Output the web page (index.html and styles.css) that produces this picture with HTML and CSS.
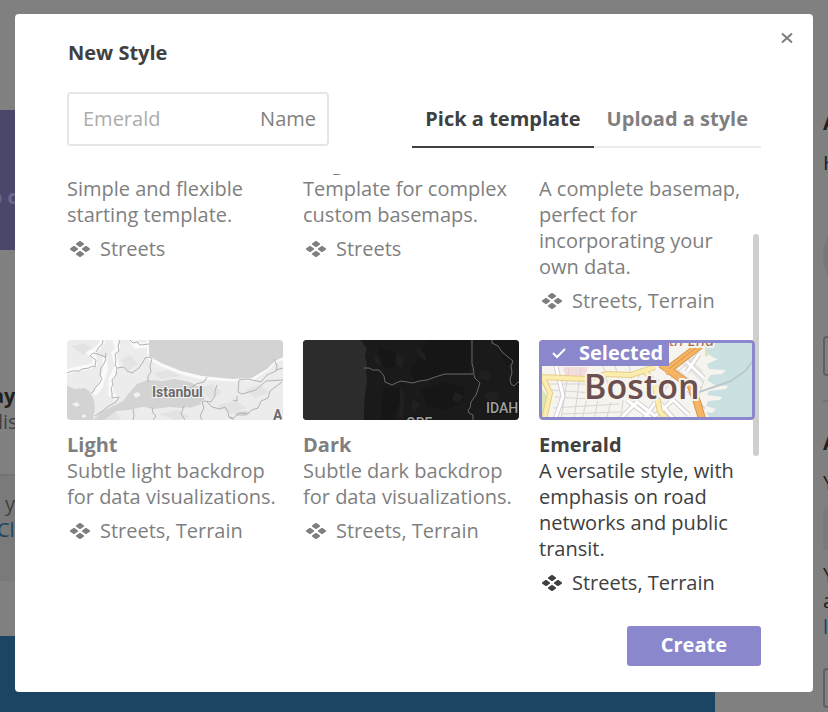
FILE: index.html
```html
<!DOCTYPE html>
<html lang="en">
  <head>
    <meta charset="UTF-8" />
    <meta name="viewport" content="width=device-width, initial-scale=1.0" />
    <title>New Style</title>
    <link rel="stylesheet" href="styles.css">
  </head>
  <body>
    <div class="page" aria-hidden="true">
      <div class="page-main">
        <div class="hero">o d</div>
        <div class="entry">
          <div class="entry-title">ay</div>
          <div class="entry-text">lis</div>
        </div>
        <div class="notice">
          <div class="notice-text">y</div>
          <div class="notice-link">Cl</div>
        </div>
        <div class="band"></div>
      </div>
      <div class="page-side">
        <div class="side-title">A</div>
        <div class="side-text">H</div>
        <div class="side-avatar"></div>
        <div class="side-box"></div>
        <div class="side-rule"></div>
        <div class="side-title">A</div>
        <div class="side-text">Y</div>
        <div class="side-token"></div>
        <div class="side-note">Y<br />a<br /><span class="side-link">l</span></div>
        <div class="side-box"></div>
      </div>
    </div>

    <svg class="sprite" aria-hidden="true">
      <symbol id="icon-sources" viewBox="0 0 20 16">
        <path d="M9.500 0h1l3.500 2.500v1L10.500 6h-1L6 3.500v-1zM3.500 5h1L8 7.500v1L4.500 11h-1L0 8.500v-1zM15.500 5h1L20 7.500v1L16.500 11h-1L12 8.500v-1zM9.500 10h1l3.500 2.500v1L10.500 16h-1L6 13.500v-1z" />
      </symbol>
    </svg>

    <div class="overlay">
      <form class="modal" role="dialog" aria-labelledby="modalTitle">
        <button type="button" class="close" aria-label="Close">
          <svg width="12" height="12" viewBox="0 0 12 12"><path d="M1 1.500l10 9M11 1.500l-10 9" /></svg>
        </button>
        <h1 id="modalTitle">New Style</h1>

        <div class="toolbar">
          <div class="name-field">
            <input type="text" id="styleName" placeholder="Emerald" />
            <label for="styleName">Name</label>
          </div>
          <div class="tabs">
            <button type="button" class="tab active">Pick a template</button>
            <button type="button" class="tab">Upload a style</button>
          </div>
        </div>

        <div class="picker">
          <div class="templates">
            <label class="template">
              <input type="radio" name="template" value="basic" />
              <span class="template-title">Basic</span>
              <span class="template-text">Simple and flexible starting template.</span>
              <span class="sources"><svg class="icon"><use href="#icon-sources" /></svg>Streets</span>
            </label>

            <label class="template">
              <input type="radio" name="template" value="bright" />
              <span class="template-title">Bright</span>
              <span class="template-text">Template for complex custom basemaps.</span>
              <span class="sources"><svg class="icon"><use href="#icon-sources" /></svg>Streets</span>
            </label>

            <label class="template">
              <input type="radio" name="template" value="streets" />
              <span class="template-title">Streets</span>
              <span class="template-text">A complete basemap, perfect for incorporating your own data.</span>
              <span class="sources"><svg class="icon"><use href="#icon-sources" /></svg>Streets, Terrain</span>
            </label>

            <label class="template">
              <input type="radio" name="template" value="light" />
              <span class="thumb">
                <svg class="map" viewBox="0 0 216 80" preserveAspectRatio="xMidYMid slice">
                  <rect width="216" height="80" fill="#ececec" />
                  <g fill="#e3e3e3">
                    <path d="M4 6l14-3 10 7-12 5zM54 20l9-5 8 9-10 7zM86 33l16-3 12 6-20 3zM132 48l14-4 9 8-12 8zM178 50l14-5 10 7-14 6zM36 74l12-3 6 9H36zM150 66l18-6 12 8-16 6zM92 74l18-4 14 7-16 3z" />
                  </g>
                  <g fill="none" stroke="#fafafa" stroke-width="5" stroke-linejoin="round">
                    <path d="M82 0l1 17 12 7 20 8 20 5 30 2 20-1 15-10 8-8 8-3" />
                    <path d="M0 32l10-3 12-2 6-3-1-8-5-3 8-4 5-6 1-5M38 17l0 14-5 16-6 7M48 0l3 8-4 5 3 14-6 12 0 16 6 3" />
                    <path d="M65 0l4 6 13-1" />
                  </g>
                  <g fill="#d3d3d3">
                    <path d="M82 0v16l12 7 20 8 21 5 30 3 20-1 15-9 8-8 8-4V0z" />
                    <path d="M0 46l8 3 10-1 5 4 4 8 1 8-2 12H0z" />
                    <path d="M26 80l10-9 12-6 8-4 7-9 7-8 11-4 14 1 12-2 16 3 9 5 6 12-8 6-14 3-14-1-15 2-12-2-14 3-12 1-12 9z" />
                    <path d="M110 63l15-2 10 3-12 4zM168 73l10-2 5 2-4 3h-10z" />
                  </g>
                  <g fill="#f1f1f1">
                    <path d="M5 64l5-2 3 3-4 2zM15 75l3-1 1 3-4 1zM66 54l5-2 3 3-5 3zM74 68l5-1-3 4z" />
                  </g>
                  <g fill="none" stroke="#b3b3b3" stroke-width="1" stroke-linejoin="round">
                    <path d="M0 33l5-2 7 0 3-2 7-1 4-2 2 1 1-7-6-4 3-3 5 1 5 2 3 1-1 5-4 6-1 7 2 4-3 5-4 4-1 3-3 2" />
                    <path d="M39 13l-1 5M29 12l3-5 3-2 1-5M53 0l-2 6 1 5-4 3 1 6-1 5 2 3-1 7-4 5 1 5-2 3 1 5 0 5 7-1-3 5-7 4-8 6-6 4" />
                    <path d="M50 28l7-1 3 4 5 2 7-5 4-6 2-4 5-1 2 2-2 7 1 6-3 4 0 6M63 0l3 3 4-1 3 3 9-1" />
                    <path d="M140 37l-3 5-8 2-5 4-4 7 5 1" />
                    <path d="M207 19l3 7-1 5-9 4-6 7-13-3-9 1-1 12 4 2 14-4 10-9 17-1M209 30l7-2M170 56l0 5-4-1M150 45l-2 6 0 5-4 6-6-1-3 1 2 6-4 8 2 4" />
                    <path d="M66 69l1 6-1 5M85 67l1 6 3 3-3 4M117 66l-3 8 4 6M140 62l5 5 8 2 5-2 3 5 1 5 5 3M162 77l5 1 5-5 8 1 5-4 6-2 3-7 7-3 2-7 12-9" />
                  </g>
                  <g class="label-light">
                    <text x="85" y="57">Istanbul</text>
                    <text x="206" y="80">A</text>
                  </g>
                </svg>
              </span>
              <span class="template-title">Light</span>
              <span class="template-text">Subtle light backdrop for data visualizations.</span>
              <span class="sources"><svg class="icon"><use href="#icon-sources" /></svg>Streets, Terrain</span>
            </label>

            <label class="template">
              <input type="radio" name="template" value="dark" />
              <span class="thumb">
                <svg class="map" viewBox="0 0 216 80" preserveAspectRatio="xMidYMid slice">
                  <rect width="216" height="80" fill="#1a1a1a" />
                  <path d="M0 0h58l3 5 3 3-2 8 2 9-1 5 1 12-2 12-1 12 0 14H0z" fill="#2c2c2c" />
                  <g fill="#161616">
                    <path d="M124 0h43v33l-26 2-14 4-14 3-6-12 8-12zM76 8l14 3 6 12-10 6-12-6zM80 48l16-2 2 14-8 20H78zM118 50l24-8 20 6-3 14-14 8-20-4zM190 0h26v18l-12 8z" />
                  </g>
                  <g fill="#202020">
                    <path d="M94 14l8 4-3 10-7-4zM112 6l10 8 2 8-8-6zM70 14l6 2 3 10-6-2zM97 46l5 10-2 22-4-1 1-16zM178 30l10 3-2 9-10-4zM180 54l14-3 3 8-12 5zM152 52l8 4-4 7-7-3zM110 60l8 4-6 8-4-4z" />
                  </g>
                  <g fill="none" stroke="#686868" stroke-width="1" stroke-linejoin="round">
                    <path d="M61 28l5 0 4 2 6 0 5 6 1 6 7 3 4-2 5-2 12 2 6-2 8-1 8-3 10-3h29l-1-7-1-3V0" />
                    <path d="M171 35l1 3 5 5-2 6-2 6-5 7-1 6-2 2 1 3 4 2v6M189 0v3l6 3 4 6 6 5 5 4-2 5 1 7-2 6 1 5 3 2 4-4h3" />
                  </g>
                  <g class="label-dark">
                    <text x="183" y="73">IDAH</text>
                    <text x="103" y="88">ORE</text>
                  </g>
                </svg>
              </span>
              <span class="template-title">Dark</span>
              <span class="template-text">Subtle dark backdrop for data visualizations.</span>
              <span class="sources"><svg class="icon"><use href="#icon-sources" /></svg>Streets, Terrain</span>
            </label>

            <label class="template selected">
              <input type="radio" name="template" value="emerald" checked />
              <span class="thumb">
                <svg class="map" viewBox="0 0 216 80" preserveAspectRatio="xMidYMid slice">
                  <rect width="216" height="80" fill="#f5f4ef" />
                  <path d="M24 27h24v9H26zM118 38l12 8-5 6-10-7z" fill="#f5dcdc" />
                  <path d="M0 44l9 14-2 22H0zM166 2l6 12-6 3z" fill="#d9e5bd" />
                  <path d="M166 0L168 12L173 17L179 19L168 24L170 29L187 30L183 34L172 35L168 40L176 45L189 46L187 49L170 51L168 55L183 57L181 60L169 61L167 66L177 69L173 73L167 72L172 80H216V0z" fill="#cbe0e0" />
                  <g fill="none" stroke="#d8d3d5" stroke-width="1">
                    <path d="M10 44h40M12 50l42 3M16 57l34 2M14 68l66-4M22 74l60-2M30 28l-8 52M42 27l-7 53M52 40l-9 40M60 54l-5 26M72 62l-5 18M84 60l-2 20M64 26l5 18M76 26l5 16M90 26l3 14M102 28l-4 14M136 28l26 20M140 20l24 22M146 16l18 16M160 12l-28 26M150 50l16 18M165 40l-8 24" />
                    <path d="M216 18l-10 13-14 10-14 5-18 6" stroke="#bccaca" stroke-width="2" />
                  </g>
                  <g fill="none" stroke="#d5ced2" stroke-width="5">
                    <path d="M17 26l7 30-8 24M80 80l18-18 18 14 18-16 16 15M88 60l26 20M104 80l14-20 18 20M148 22l17 16M150 50l14 20M160 14l-12 18" />
                  </g>
                  <g fill="none" stroke="#fff" stroke-width="3">
                    <path d="M17 26l7 30-8 24M80 80l18-18 18 14 18-16 16 15M88 60l26 20M104 80l14-20 18 20M148 22l17 16M150 50l14 20M160 14l-12 18" />
                  </g>
                  <g fill="none" stroke="#e6cd86" stroke-width="6">
                    <path d="M0 37l48 2 20-5 24 1 24-8M3 36l8 17-6 27M105 30l10 12 6 30 8 8" />
                  </g>
                  <g fill="none" stroke="#fbedae" stroke-width="4">
                    <path d="M0 37l48 2 20-5 24 1 24-8M3 36l8 17-6 27M105 30l10 12 6 30 8 8" />
                  </g>
                  <g fill="none" stroke="#d99446" stroke-width="8">
                    <path d="M164 3l-38 29M122 24l30 22 6 16 6 20" />
                  </g>
                  <g fill="none" stroke="#f6b565" stroke-width="6">
                    <path d="M164 3l-38 29M122 24l30 22 6 16 6 20" />
                  </g>
                  <path d="M158 7l-28 22" fill="none" stroke="#d99446" stroke-width="1" />
                  <g class="label-emerald">
                    <text x="130" y="6" class="district">th End</text>
                    <text x="45" y="59" class="city">Boston</text>
                  </g>
                </svg>
                <span class="badge">
                  <svg width="16" height="12" viewBox="0 0 16 12"><path d="M2 6l4 4 8-8" /></svg>
                  Selected
                </span>
              </span>
              <span class="template-title">Emerald</span>
              <span class="template-text">A versatile style, with emphasis on road networks and public transit.</span>
              <span class="sources"><svg class="icon"><use href="#icon-sources" /></svg>Streets, Terrain</span>
            </label>
          </div>
          <div class="scroll-thumb"></div>
        </div>

        <div class="actions">
          <button type="submit" class="create">Create</button>
        </div>
      </form>
    </div>
  </body>
</html>
```
FILE: styles.css
```css
* {
  box-sizing: border-box;
}

body {
  margin: 0;
  background: #808080;
  color: #404040;
  font-family: "Open Sans", "Noto Sans", sans-serif;
  font-size: 20px;
  line-height: 26px;
  overflow: hidden;
}

button,
input {
  font: inherit;
  margin: 0;
}

button {
  border: none;
  background: none;
  cursor: pointer;
}

/* Dimmed page behind the dialog */
.page {
  display: flex;
  gap: 108px;
  height: 100vh;
  overflow: hidden;
}

.page-main {
  display: flex;
  flex-direction: column;
  flex: none;
  width: 715px;
  padding-top: 110px;
}

.hero {
  height: 140px;
  padding-top: 74px;
  background: #4a476a;
  color: #6b688b;
  font-weight: 700;
  text-indent: -10px;
}

.entry {
  margin-top: 133px;
  padding-bottom: 39px;
  border-bottom: 2px solid #737373;
}

.entry-title {
  color: #202020;
  font-weight: 700;
  text-indent: -8px;
}

.entry-text {
  color: #404040;
  text-indent: -2px;
}

.notice {
  padding: 15px 0 38px;
  background: #7a7a7a;
}

.notice-text {
  color: #404040;
  text-indent: 5px;
}

.notice-link {
  color: #1c4564;
  text-indent: -3px;
}

.band {
  flex: 1;
  margin-top: 55px;
  background: #1c4564;
}

.page-side {
  flex: none;
  width: 280px;
  padding-top: 110px;
  color: #202020;
}

.side-title {
  font-weight: 700;
}

.side-text {
  margin-top: 14px;
}

.side-avatar {
  width: 80px;
  height: 80px;
  margin: 40px 0;
  border-radius: 50%;
  background: #777777;
}

.side-box {
  height: 40px;
  border: 2px solid #606060;
  border-radius: 4px;
}

.side-rule {
  height: 2px;
  margin: 24px 0 28px;
  background: #737373;
}

.side-token {
  height: 42px;
  margin: 12px 0;
  border-radius: 4px;
  background: #7a7a7a;
}

.side-note {
  margin-bottom: 28px;
}

.side-link {
  color: #1c4564;
}

.sprite {
  display: none;
}

/* Dialog */
.overlay {
  position: fixed;
  inset: 0;
  padding: 14px 15px;
}

.modal {
  position: relative;
  padding: 26px 52px;
  border-radius: 4px;
  background: white;
}

.close {
  position: absolute;
  top: 12px;
  right: 14px;
  display: flex;
  padding: 6px;
}

.close svg {
  fill: none;
  stroke: #7f7f7f;
  stroke-width: 2;
}

h1 {
  margin: 0 0 26px;
  padding-left: 1px;
  font-size: 20px;
  font-weight: 700;
}

.toolbar {
  display: flex;
  justify-content: space-between;
  align-items: flex-start;
  margin-bottom: 26px;
}

.name-field {
  display: flex;
  align-items: center;
  width: 262px;
  height: 54px;
  padding: 0 11px 0 14px;
  border: 2px solid #e6e6e6;
  border-radius: 4px;
}

.name-field input {
  flex: 1;
  min-width: 0;
  padding: 0;
  border: none;
  outline: none;
  background: none;
  color: #404040;
}

.name-field input::placeholder {
  color: #acacac;
  opacity: 1;
}

.name-field label {
  color: #7f7f7f;
}

.tabs {
  display: flex;
}

.tab {
  height: 56px;
  padding: 0 13px;
  border-bottom: 2px solid #ececec;
  color: #7f7f7f;
  font-weight: 700;
}

.tab.active {
  border-bottom-color: #404040;
  color: #404040;
}

/* Template list, scrolled to its last row */
.picker {
  position: relative;
  display: flex;
  flex-direction: column;
  justify-content: flex-end;
  max-height: 432px;
  padding: 0 6px 10px 0;
  overflow: hidden;
}

.scroll-thumb {
  position: absolute;
  top: 60px;
  right: 2px;
  width: 6px;
  height: 222px;
  border-radius: 3px;
  background: #cfcfcf;
}

.templates {
  display: grid;
  grid-template-columns: repeat(3, 1fr);
  gap: 26px 20px;
}

.template {
  display: block;
  color: #7f7f7f;
  cursor: pointer;
}

.template input {
  position: absolute;
  opacity: 0;
  pointer-events: none;
}

.template.selected {
  color: #404040;
}

.thumb {
  position: relative;
  display: block;
  height: 80px;
  margin-bottom: 12px;
  border-radius: 4px;
  overflow: hidden;
}

.selected .thumb {
  z-index: 1;
}

.selected .thumb::after {
  content: "";
  position: absolute;
  inset: 0;
  border: 3px solid #8a87cc;
  border-radius: 4px;
}

.map {
  display: block;
  width: 100%;
  height: 100%;
}

.badge {
  position: absolute;
  top: 0;
  left: 0;
  display: flex;
  align-items: center;
  gap: 12px;
  padding: 0 6px 0 12px;
  background: #8a87cc;
  color: white;
  font-weight: 700;
}

.badge svg {
  fill: none;
  stroke: white;
  stroke-width: 2;
}

.template-title {
  display: block;
  font-weight: 700;
}

.template-text {
  display: block;
}

.sources {
  display: flex;
  align-items: center;
  gap: 10px;
  margin-top: 8px;
  padding-left: 3px;
}

.icon {
  width: 20px;
  height: 16px;
  fill: currentColor;
}

/* Map labels */
.label-light {
  fill: #6b6b6b;
  stroke: #f4f4f4;
  stroke-width: 2px;
  paint-order: stroke;
  font: 700 14px Roboto, sans-serif;
}

.label-dark {
  fill: #a0a0a0;
  stroke: #141414;
  stroke-width: 2px;
  paint-order: stroke;
  font: 500 14px Roboto, sans-serif;
}

.label-emerald {
  stroke: #f5f4ef;
  stroke-width: 4px;
  stroke-linejoin: round;
  paint-order: stroke;
}

.city {
  fill: #6d4f50;
  font-size: 34px;
  font-weight: 600;
}

.district {
  fill: #a06650;
  font-size: 16px;
  font-style: italic;
}

.actions {
  display: flex;
  justify-content: flex-end;
  margin-top: 20px;
}

.create {
  height: 40px;
  padding: 0 34px 2px;
  border-radius: 3px;
  background: #8a87cc;
  color: white;
  font-weight: 700;
}

.create:hover {
  background: #7a77bc;
}
```
